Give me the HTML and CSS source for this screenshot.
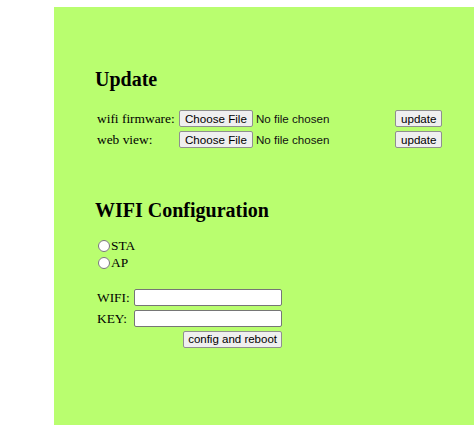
FILE: index.html
```html
<!DOCTYPE html>
<html lang="en">
<head>
<meta charset="utf-8">
<title>Device setup</title>
<link rel="stylesheet" href="styles.css">
</head>
<body>
<div class="panel">
  <section class="update">
    <h2 class="title">Update</h2>
    <form class="update-grid">
      <label class="lbl" for="fw">wifi firmware:</label>
      <input class="file" id="fw" type="file">
      <button class="btn" type="button">update</button>
      <label class="lbl" for="web">web view:</label>
      <input class="file" id="web" type="file">
      <button class="btn" type="button">update</button>
    </form>
  </section>
  <section class="wifi">
    <h2 class="title">WIFI Configuration</h2>
    <div class="modes">
      <label class="mode"><input class="radio" type="radio" name="mode">STA</label>
      <label class="mode"><input class="radio" type="radio" name="mode">AP</label>
    </div>
    <form class="wifi-grid">
      <label class="lbl" for="ssid">WIFI:</label>
      <input class="text" id="ssid" type="text">
      <label class="lbl" for="key">KEY:</label>
      <input class="text" id="key" type="text">
      <button class="btn submit" type="button">config and reboot</button>
    </form>
  </section>
</div>
</body>
</html>
```

FILE: styles.css
```css
html, body {
  margin: 0;
  padding: 0;
  background: #ffffff;
  overflow: hidden;
}

body {
  font-family: "Liberation Serif", "Times New Roman", serif;
  font-size: 13.4px;
  color: #000;
}

.panel {
  margin: 7px 0 0 54px;
  height: calc(100vh - 7px);
  background: #b9fe6f;
  padding: 60px 0 0 41px;
  box-sizing: border-box;
}

.title {
  margin: 0;
  font-size: 20px;
  font-weight: bold;
  line-height: 24px;
}

.update-grid {
  margin: 19px 0 0 2px;
  display: grid;
  grid-template-columns: 78px 212px auto;
  column-gap: 4px;
  row-gap: 4px;
  align-items: center;
  justify-items: start;
}

.lbl {
  font-size: 13.4px;
  line-height: 17px;
  white-space: nowrap;
}

.file {
  font-family: "Liberation Sans", Arial, sans-serif;
  font-size: 11.6px;
  color: #111;
  width: 212px;
  margin: 0;
}

.file::file-selector-button {
  font-family: "Liberation Sans", Arial, sans-serif;
  font-size: 11.6px;
  height: 17px;
  padding: 0 5px;
  margin: 0 3px 0 0;
  border: 1px solid #8f8f8f;
  border-radius: 2px;
  background: #efefef;
  color: #000;
}

.btn {
  font-family: "Liberation Sans", Arial, sans-serif;
  font-size: 11.6px;
  height: 17px;
  line-height: 13px;
  padding: 0 5px;
  margin: 0;
  border: 1px solid #8f8f8f;
  border-radius: 2px;
  background: #efefef;
  color: #000;
}

.submit {
  grid-column: 2;
  justify-self: end;
  font-size: 11.5px;
  padding: 0 4px;
}

.wifi {
  margin-top: 50px;
}

.modes {
  margin: 15px 0 0 3px;
  display: flex;
  flex-direction: column;
}

.mode {
  display: flex;
  align-items: center;
  height: 17px;
}

.radio {
  width: 12px;
  height: 12px;
  margin: 0 1px 0 0;
}

.wifi-grid {
  margin: 18px 0 0 2px;
  display: grid;
  grid-template-columns: 34px 148px;
  column-gap: 3px;
  row-gap: 4px;
  align-items: center;
}

.text {
  width: 148px;
  height: 17px;
  box-sizing: border-box;
  margin: 0;
  padding: 1px 2px;
  border: 1px solid #767676;
  border-radius: 2px;
  background: #fff;
  font-size: 11.6px;
}
```
